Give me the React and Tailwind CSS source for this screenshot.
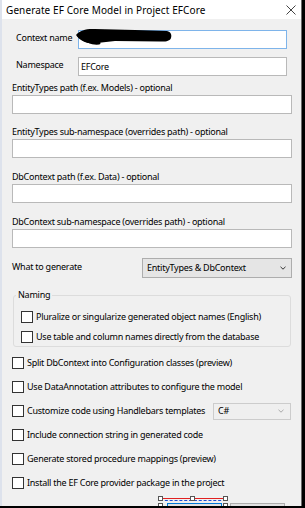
import React from "react";

const font = { fontFamily: '"Noto Sans", "Open Sans", sans-serif' };
const T = "text-[9px] leading-[14px] tracking-[-0.25px] text-black whitespace-nowrap";

function Chevron({ color = "#333" }) {
  return (
    <svg width="6" height="4" viewBox="0 0 6 4" className="shrink-0">
      <polyline points="0.5,0.8 3,3.2 5.5,0.8" fill="none" stroke={color} strokeWidth="1" />
    </svg>
  );
}

function Box() {
  return <div className="w-[12px] h-[12px] border border-[#333] bg-white shrink-0" />;
}

function Field({ label, mt }) {
  return (
    <div className={mt}>
      <div className={"h-[14px] " + T}>{label}</div>
      <div className="h-[19px] border border-[#b9b9b9] bg-white" />
    </div>
  );
}

function Check({ children, right }) {
  return (
    <div className="h-[24px] flex items-center">
      <Box />
      <span className={"ml-[3px] " + T}>{children}</span>
      {right}
    </div>
  );
}

export default function App() {
  return (
    <div className="w-[305px] h-[508px] bg-black overflow-hidden" style={font}>
      <div className="flex h-[506px]">
        <div className="w-[2px] bg-[#dde2ec] shrink-0" />
        <div className="w-[299px] bg-[#f0f0f0] flex flex-col relative overflow-hidden">
          <div className="h-[19px] shrink-0 bg-white flex items-center justify-between pl-[4px] pr-[5px]">
            <span className="text-[10px] leading-[14px] tracking-[0.1px] text-black whitespace-nowrap">Generate EF Core Model in Project EFCore</span>
            <svg width="10" height="10" viewBox="0 0 10 10">
              <path d="M0.5 0.5 L9.5 9.5 M9.5 0.5 L0.5 9.5" stroke="#444" strokeWidth="1" />
            </svg>
          </div>
          <div className="pl-[10px] pr-[9px] pt-[11px] flex flex-col shrink-0">
            <div className="flex items-center pl-[4px] relative">
              <span className={"w-[62px] -mt-[3px] " + T}>Context name</span>
              <div className="w-[209px] h-[19px] border border-[#7eb4ea] bg-white" />
              <svg className="absolute left-[63px] top-[-3px]" width="100" height="20" viewBox="0 0 100 20">
                <path d="M1 8 C5 3 12 1.5 20 2 L60 3 L92 4 C96 5 97 8 96 11 C95 14 90 15 85 14.5 L40 14 L22 16 C12 17.5 5 14 1 8 Z" fill="#000" />
                <path d="M4 9 C10 13 16 17 24 16" stroke="#000" strokeWidth="3" fill="none" strokeLinecap="round" />
              </svg>
            </div>
            <div className="flex items-center pl-[4px] mt-[8px]">
              <span className={"w-[62px] -mt-[4px] " + T}>Namespace</span>
              <div className="w-[209px] h-[19px] border border-[#b9b9b9] bg-white pl-[2px] text-[9px] leading-[17px] tracking-[-0.25px] text-black">EFCore</div>
            </div>
            <Field label="EntityTypes path (f.ex. Models) - optional" mt="mt-[5px]" />
            <Field label="EntityTypes sub-namespace (overrides path) - optional" mt="mt-[11px]" />
            <Field label="DbContext path (f.ex. Data) - optional" mt="mt-[12px]" />
            <Field label="DbContext sub-namespace (overrides path) - optional" mt="mt-[12px]" />
            <div className="mt-[10px] flex items-center justify-between">
              <span className={"-mt-[2px] " + T}>What to generate</span>
              <div className="w-[150px] h-[20px] border border-[#adadad] bg-[#e5e5e5] flex items-center justify-between pl-[4px] pr-[5px]">
                <span className={T}>EntityTypes &amp; DbContext</span>
                <Chevron />
              </div>
            </div>
            <fieldset className="mt-[10px] mx-[1px] border border-[#dcdcdc] rounded-[3px]">
              <legend className={"ml-[2px] px-[2px] " + T}>Naming</legend>
              <div className="pl-[7px] pt-[6px] flex flex-col gap-[2px]">
                <div className="h-[18px] flex items-center">
                  <Box />
                  <span className={"ml-[3px] " + T}>Pluralize or singularize generated object names (English)</span>
                </div>
                <div className="h-[18px] flex items-center">
                  <Box />
                  <span className={"ml-[3px] " + T}>Use table and column names directly from the database</span>
                </div>
              </div>
            </fieldset>
            <div className="mt-[4px] flex flex-col">
              <Check>Split DbContext into Configuration classes (preview)</Check>
              <Check>Use DataAnnotation attributes to configure the model</Check>
              <Check
                right={
                  <div className="ml-auto mr-[1px] w-[78px] h-[17px] border border-[#cccccc] bg-[#efefef] flex items-center justify-between pl-[4px] pr-[6px]">
                    <span className={T}>C#</span>
                    <Chevron color="#aaa" />
                  </div>
                }
              >
                Customize code using Handlebars templates
              </Check>
              <Check>Include connection string in generated code</Check>
              <Check>Generate stored procedure mappings (preview)</Check>
              <Check>Install the EF Core provider package in the project</Check>
            </div>
            <div className="mt-[8px] flex justify-end gap-[8px] pr-[7px]">
              <div className="w-[55px] h-[23px] border border-[#0078d7] bg-[#e1e1e1]" />
              <div className="w-[55px] h-[23px] border border-[#adadad] bg-[#e1e1e1]" />
            </div>
          </div>
          <div className="absolute left-[156px] top-[496px] w-[70px] h-[12px]">
            <div className="absolute left-[2px] right-[2px] top-[2px] h-[1px] bg-[#e02020]" />
            <div className="absolute left-[2px] right-[2px] top-[4px] border-t border-dashed border-[#1f4fd0]" />
            <div className="absolute left-0 top-0 w-[5px] h-[5px] border border-[#555] bg-white" />
            <div className="absolute left-[32px] top-0 w-[5px] h-[5px] border border-[#555] bg-white" />
            <div className="absolute right-0 top-0 w-[5px] h-[5px] border border-[#555] bg-white" />
            <div className="absolute left-0 top-[7px] w-[5px] h-[5px] border border-[#555] bg-white" />
            <div className="absolute right-0 top-[7px] w-[5px] h-[5px] border border-[#555] bg-white" />
          </div>
        </div>
        <div className="w-[1px] bg-[#6b6b6b] shrink-0" />
      </div>
    </div>
  );
}
